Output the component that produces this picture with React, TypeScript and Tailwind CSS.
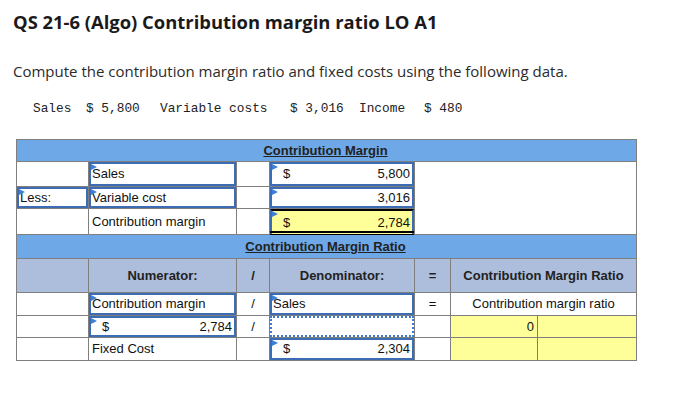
import React from "react";

const Flag = () => (
  <span className="absolute left-0 top-0 w-0 h-0 border-t-[3px] border-b-[3px] border-l-[6px] border-t-transparent border-b-transparent border-l-[#3b7fd6]" />
);

const Input = ({ children, className = "" }: { children?: React.ReactNode; className?: string }) => (
  <div className={"relative h-full w-full border-2 border-[#3c6db4] flex items-center " + className}>
    <Flag />
    {children}
  </div>
);

const Cell = ({ children, className = "" }: { children?: React.ReactNode; className?: string }) => (
  <div className={"bg-white flex items-center " + className}>{children}</div>
);

export default function App() {
  return (
    <div className="w-[695px] h-[409px] bg-white relative" style={{ fontFamily: '"Liberation Sans", Arial, sans-serif' }}>
      <div className="pl-[13px] pt-[10px]" style={{ fontFamily: '"Open Sans", Lato, sans-serif' }}>
        <h1 className="text-[18.4px] leading-[24px] font-bold text-[#1a1a1a]">QS 21-6 (Algo) Contribution margin ratio LO A1</h1>
        <p className="mt-[27px] text-[15px] leading-[20px] text-[#2b2b2b]">Compute the contribution margin ratio and fixed costs using the following data.</p>
      </div>
      <div className="flex mt-[20px] pl-[33px] text-[12.8px] leading-[16px] text-[#222]" style={{ fontFamily: '"Liberation Mono", "Courier New", monospace' }}>
        <span className="w-[53px]">Sales</span>
        <span className="w-[74px]">$ 5,800</span>
        <span className="w-[130px]">Variable costs</span>
        <span className="w-[69px]">$ 3,016</span>
        <span className="w-[65px]">Income</span>
        <span>$ 480</span>
      </div>
      <div className="mt-[22px] ml-[16px] w-[621px] grid grid-cols-[71px_147px_32px_144px_35px_86px_98px] grid-rows-[21px_24px_21px_25px_23px_33px_22px_21px_22px] gap-px bg-[#7f7f7f] p-px text-[13px] text-[#111]">
        {/* header 1 */}
        <div className="col-span-7 bg-[#6fa8e6] grid grid-cols-[71px_147px_32px_144px_35px_86px_98px] gap-px">
          <div className="col-start-3 col-span-2 flex items-center justify-center font-bold underline text-[#222] pt-[1px]">Contribution Margin</div>
        </div>
        {/* row 1 */}
        <Cell />
        <Cell><Input className="pl-[1px]">Sales</Input></Cell>
        <Cell />
        <Cell><Input className="justify-between pl-[11px] pr-[2px]"><span>$</span><span>5,800</span></Input></Cell>
        <Cell className="col-span-3 row-span-3" />
        {/* row 2 */}
        <Cell><Input className="pl-[1px]">Less:</Input></Cell>
        <Cell><Input className="pl-[1px]">Variable cost</Input></Cell>
        <Cell />
        <Cell><Input className="justify-end pr-[2px]">3,016</Input></Cell>
        {/* row 3 */}
        <Cell />
        <Cell className="pl-[3px]">Contribution margin</Cell>
        <Cell />
        <Cell className="relative">
          <div className="relative h-full w-full bg-[#ffff99] border-l-2 border-r-2 border-[#3c6db4] border-t-2 border-t-black flex items-center justify-between pl-[11px] pr-[2px]">
            <Flag />
            <span>$</span><span>2,784</span>
            <div className="absolute left-[-2px] right-[-2px] bottom-[-1px] h-[4px] border-t-2 border-b border-black" />
          </div>
        </Cell>
        {/* header 2 */}
        <div className="col-span-7 bg-[#6fa8e6] grid grid-cols-[71px_147px_32px_144px_35px_86px_98px] gap-px">
          <div className="col-start-3 col-span-2 flex items-center justify-center font-bold underline text-[#222] pt-[1px]">Contribution Margin Ratio</div>
        </div>
        {/* header 3 */}
        <div className="bg-[#adbedd]" />
        <div className="bg-[#adbedd] flex items-center justify-center font-bold text-[#222]">Numerator:</div>
        <div className="bg-[#adbedd] flex items-center justify-center font-bold text-[#222]">/</div>
        <div className="bg-[#adbedd] flex items-center justify-center font-bold text-[#222]">Denominator:</div>
        <div className="bg-[#adbedd] flex items-center justify-center font-bold text-[#222]">=</div>
        <div className="col-span-2 bg-[#adbedd] flex items-center justify-center font-bold text-[#222]">Contribution Margin Ratio</div>
        {/* row a */}
        <Cell />
        <Cell><Input className="pl-[1px]">Contribution margin</Input></Cell>
        <Cell className="justify-center">/</Cell>
        <Cell><Input className="pl-[1px]">Sales</Input></Cell>
        <Cell className="justify-center">=</Cell>
        <Cell className="col-span-2 justify-center">Contribution margin ratio</Cell>
        {/* row b */}
        <Cell />
        <Cell><Input className="justify-between pl-[11px] pr-[2px]"><span>$</span><span>2,784</span></Input></Cell>
        <Cell className="justify-center">/</Cell>
        <Cell><div className="h-full w-full border-2 border-dotted border-[#3c7ad0]" /></Cell>
        <Cell />
        <div className="bg-[#ffff99] flex items-center justify-end pr-[3px]">0</div>
        <div className="bg-[#ffff99]" />
        {/* row c */}
        <Cell />
        <Cell className="pl-[3px]">Fixed Cost</Cell>
        <Cell />
        <Cell><Input className="justify-between pl-[11px] pr-[2px]"><span>$</span><span>2,304</span></Input></Cell>
        <Cell />
        <div className="bg-[#ffff99]" />
        <div className="bg-[#ffff99]" />
      </div>
    </div>
  );
}
